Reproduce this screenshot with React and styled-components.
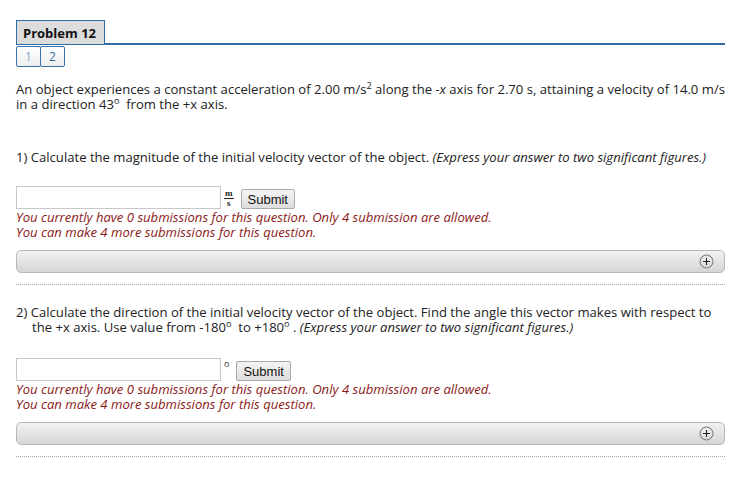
import React from "react";
import styled, { createGlobalStyle } from "styled-components";

const Global = createGlobalStyle`
  body {
    margin: 0;
    background: #fff;
    font-family: "Open Sans", "Noto Sans", sans-serif;
    font-size: 13.1px;
    color: #222;
  }
  sup {
    font-size: 9px;
    line-height: 0;
    vertical-align: 5px;
  }
`;

const Page = styled.div`
  width: 709px;
  padding: 20px 24px 30px 16px;
`;

const TabBar = styled.div`
  display: flex;
  border-bottom: 2px solid #2f6ca4;
`;

const Tab = styled.div`
  height: 23px;
  width: 75px;
  padding: 0 6px;
  display: flex;
  align-items: center;
  background: #dcdcdc;
  border: 1px solid #2f6ca4;
  border-bottom: none;
  font-weight: 700;
  font-size: 13px;
  color: #111;
  margin-bottom: -1px;
`;

const Pager = styled.div`
  display: flex;
  margin-top: 1px;
`;

const PageBtn = styled.div`
  width: 23px;
  height: 19px;
  display: flex;
  align-items: center;
  justify-content: center;
  border: 1px solid #3a74ab;
  border-radius: 2px;
  margin-right: -1px;
  background: linear-gradient(#ffffff, #eeeeee);
  color: ${(p) => (p.$active ? "#8aa6c6" : "#2f6ca4")};
  font-size: 12px;
`;

const Intro = styled.p`
  margin: 15px 0 0;
  line-height: 15px;
`;

const Question = styled.div`
  margin-top: ${(p) => p.$gap}px;
`;

const Prompt = styled.p`
  margin: 0;
  line-height: 15px;
  padding-left: 16px;
  text-indent: -16px;
`;

const Note = styled.i``;

const AnswerRow = styled.div`
  display: flex;
  align-items: flex-start;
  margin-top: ${(p) => p.$gap}px;
  height: 23px;
`;

const Field = styled.input`
  box-sizing: border-box;
  width: 205px;
  height: 23px;
  border: 1px solid #c8c8c8;
  margin: 0;
`;

const Unit = styled.span`
  display: inline-flex;
  flex-direction: column;
  align-items: center;
  font-family: "Liberation Serif", serif;
  font-weight: 700;
  font-size: 9px;
  line-height: 9px;
  margin: 3px 7px 0 3px;
`;

const UnitTop = styled.span`
  border-bottom: 1px solid #222;
  padding: 0 1px;
`;

const Degree = styled.span`
  font-size: 9px;
  line-height: 9px;
  margin: 1px 7px 0 3px;
  color: #333;
`;

const SubmitBtn = styled.button`
  height: 20px;
  padding: 0 6px;
  font-family: "Liberation Sans", Arial, sans-serif;
  font-size: 13px;
  color: #111;
  background: linear-gradient(#f4f4f4, #dedede);
  border: 1px solid #a9a9a9;
  border-radius: 2px;
  margin-top: 3px;
`;

const Status = styled.div`
  padding-top: 1px;
  color: #8b1a1a;
  font-style: italic;
  line-height: 15px;
`;

const Hint = styled.div`
  margin-top: 10px;
  height: 21px;
  border: 1px solid #b8b8b8;
  border-radius: 5px;
  background: linear-gradient(#f2f2f2, #d6d6d6);
  display: flex;
  justify-content: flex-end;
  align-items: center;
  padding-right: 10px;
`;

const Divider = styled.div`
  margin-top: 11px;
  border-top: 1px dotted #a8a8a8;
`;

const Plus = () => (
  <svg width="15" height="15" viewBox="0 0 15 15">
    <defs>
      <radialGradient id="pg" cx="50%" cy="40%" r="60%">
        <stop offset="0%" stopColor="#ffffff" />
        <stop offset="100%" stopColor="#cfcfcf" />
      </radialGradient>
    </defs>
    <circle cx="7.5" cy="7.5" r="6.5" fill="url(#pg)" stroke="#777" strokeWidth="1" />
    <path d="M7.5 4v7M4 7.5h7" stroke="#222" strokeWidth="1.2" />
  </svg>
);

function AnswerBlock({ unit, gap }) {
  return (
    <>
      <AnswerRow $gap={gap}>
        <Field type="text" />
        {unit === "ms" ? (
          <Unit>
            <UnitTop>m</UnitTop>
            <span>s</span>
          </Unit>
        ) : (
          <Degree>o</Degree>
        )}
        <SubmitBtn>Submit</SubmitBtn>
      </AnswerRow>
      <Status>
        You currently have 0 submissions for this question. Only 4 submission are allowed.
        <br />
        You can make 4 more submissions for this question.
      </Status>
      <Hint>
        <Plus />
      </Hint>
      <Divider />
    </>
  );
}

export default function App() {
  return (
    <Page>
      <Global />
      <TabBar>
        <Tab>Problem 12</Tab>
      </TabBar>
      <Pager>
        <PageBtn $active>1</PageBtn>
        <PageBtn>2</PageBtn>
      </Pager>
      <Intro>
        An object experiences a constant acceleration of 2.00 m/s<sup>2</sup> along the <i>-x</i> axis
        for 2.70 s, attaining a velocity of 14.0 m/s in a direction 43<sup>o</sup>&nbsp; from the +x axis.
      </Intro>
      <Question $gap={38}>
        <Prompt>
          1) Calculate the magnitude of the initial velocity vector of the object.{" "}
          <Note>(Express your answer to two significant figures.)</Note>
        </Prompt>
        <AnswerBlock unit="ms" gap={21} />
      </Question>
      <Question $gap={20}>
        <Prompt>
          2) Calculate the direction of the initial velocity vector of the object. Find the angle
          this vector makes with respect to the +x axis. Use value from -180<sup>o</sup>&nbsp; to +180
          <sup>o</sup>&nbsp;. <Note>(Express your answer to two significant figures.)</Note>
        </Prompt>
        <AnswerBlock unit="deg" gap={23} />
      </Question>
    </Page>
  );
}
